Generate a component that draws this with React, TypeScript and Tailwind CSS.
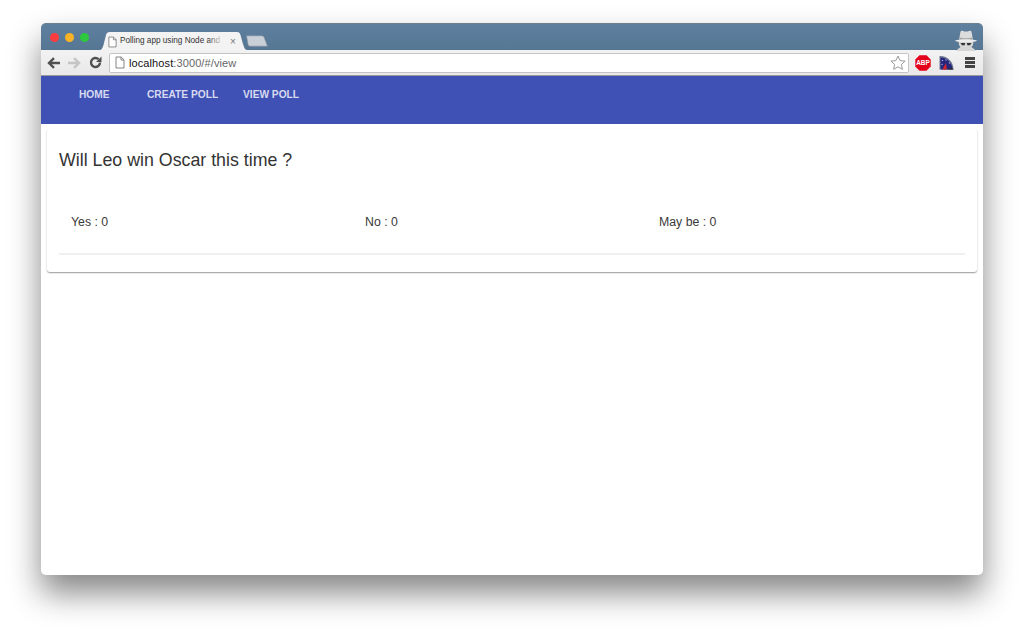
import React from 'react';

const sans = "font-['Liberation_Sans',Arial,sans-serif]";

const PageIcon = ({ className }: { className: string }) => (
  <svg className={className} viewBox="0 0 10 12" fill="#fff" stroke="#777" strokeWidth="0.9">
    <path d="M1 .5h5.200L9 3.300v8.200H1z" />
    <path d="M6 .5v3h3" fill="none" />
  </svg>
);

const Spy = () => (
  <svg width="24" height="21" viewBox="0 0 24 21" className="absolute right-[5px] top-[6px]">
    <path d="M5 10 6.400 2.200C6.700.8 7.900.4 9 1c1.900.8 4.100.8 6 0 1.100-.6 2.300-.2 2.600 1.200L19 10z" fill="#dcdcdc" />
    <path d="M5.600 7.500c4 1.100 8.800 1.100 12.800 0l.4 2.500H5.200z" fill="#a6a6a6" />
    <path d="M.8 10.800C5 8.800 19 8.800 23.200 10.800 19 12.800 5 12.800.8 10.800z" fill="#ececec" />
    <path d="M4.800 12h14.400c.4 2.300-.5 4-1.700 5l5 4H1.500l5-4C5.300 16 4.400 14.300 4.800 12z" fill="#d6d6d6" />
    <path d="M6.500 13h4.700l-.6 2.300H8zM12.800 13h4.700L16 15.300h-2.600z" fill="#333" />
  </svg>
);

const Abp = () => (
  <svg width="16" height="16" viewBox="0 0 16 16">
    <path d="M4.500.3h7l4.200 4.200v7l-4.200 4.200h-7L.3 11.500v-7z" fill="#e4001b" />
    <text x="8" y="10.400" textAnchor="middle" fontSize="6.400" fontWeight="700" fill="#fff" fontFamily="Liberation Sans, sans-serif">ABP</text>
  </svg>
);

const Gauge = () => (
  <svg width="15" height="15" viewBox="0 0 15 15">
    <path d="M.5 14.500V1C8 .5 14.500 6.500 14.500 14.500z" fill="#6f7690" />
    <path d="M1.500 14.500V2.500C8 2.500 13 7.500 13.500 14.500z" fill="#26267c" />
    <path d="M9 14.500A3 3 0 0 1 14.500 14.500z" fill="#2c2c34" />
    <path d="M3.500 14.500 7 8l.8 6.500z" fill="#d8232a" />
    <circle cx="3.500" cy="5.500" r=".7" fill="#a9b0ea" />
    <circle cx="7" cy="5" r=".7" fill="#a9b0ea" />
    <circle cx="10.500" cy="8" r=".7" fill="#a9b0ea" />
    <circle cx="3" cy="9.500" r=".7" fill="#a9b0ea" />
  </svg>
);

const Toolbar = () => (
  <div className="h-[26px] bg-gradient-to-b from-[#f2f2f2] to-[#e9e9e9] border-b border-[#9a9a9a] flex items-center pl-[6px] pr-[7px]">
    <svg width="13" height="12" viewBox="0 0 13 12" fill="none" stroke="#505050" strokeWidth="2.400">
      <path d="M13 6H3M7 1.200 2 6l5 4.800" />
    </svg>
    <svg width="13" height="12" viewBox="0 0 13 12" fill="none" stroke="#c4c4c4" strokeWidth="2.400" className="ml-[8px]">
      <path d="M0 6h10M6 1.200 11 6l-5 4.800" />
    </svg>
    <svg width="13" height="13" viewBox="0 0 13 13" fill="none" className="ml-[8px]">
      <path d="M11 6.500A4.500 4.500 0 1 1 9.600 3.200" stroke="#505050" strokeWidth="2.400" />
      <path d="M12.500.5V6H7z" fill="#505050" />
    </svg>
    <div className="ml-[7px] w-[800px] h-[20px] bg-white border border-[#c4c4c4] rounded-[2px] flex items-center pl-[5px] pr-[2px]">
      <PageIcon className="w-[10px] h-[13px]" />
      <span className={`ml-[4px] pt-[1px] text-[11px] tracking-[0.1px] text-[#111] ${sans}`}>
        localhost<span className="text-[#666]">:3000/#/view</span>
      </span>
      <svg width="16" height="15" viewBox="0 0 16 15" fill="#fff" stroke="#9a9a9a" className="ml-auto">
        <path d="m8 1 2.100 4.600 5 .5-3.700 3.300 1 4.900L8 11.800l-4.400 2.500 1-4.900L.9 6.100l5-.5z" />
      </svg>
    </div>
    <div className="ml-[6px] flex items-center">
      <Abp />
      <div className="ml-[8px]"><Gauge /></div>
      <div className="ml-[11px] w-[10px] flex flex-col gap-[1.500px]">
        <div className="h-[2.500px] bg-[#444]" />
        <div className="h-[2.500px] bg-[#444]" />
        <div className="h-[2.500px] bg-[#444]" />
      </div>
    </div>
  </div>
);

const TitleBar = () => (
  <div className="relative h-[27px] bg-gradient-to-b from-[#5f7f9f] to-[#567694] border-t border-[#6e7f8e] rounded-t-[5px] flex items-end pl-[9px]">
    <div className="self-center flex gap-[6px]">
      <div className="w-[9px] h-[9px] rounded-full bg-[#fc3d3f]" />
      <div className="w-[9px] h-[9px] rounded-full bg-[#fdb325]" />
      <div className="w-[9px] h-[9px] rounded-full bg-[#2dc83e]" />
    </div>
    <div className="relative ml-[11px] w-[147px] h-[18px] flex items-center pl-[8px] pt-[1px]">
      <svg viewBox="0 0 147 18" preserveAspectRatio="none" className="absolute inset-0 w-full h-full" fill="#f3f3f3">
        <path d="M0 18C2 18 3 15 4 11L6 3C6.500 1 7.500 0 10 0H137C139 0 140 1 140.500 3L143 12C144 15 145 18 147 18z" />
      </svg>
      <PageIcon className="relative w-[9px] h-[12px] shrink-0" />
      <span className={`relative ml-[3px] w-[104px] whitespace-nowrap text-[8.200px] text-[#333] ${sans}`}>
        Polling app using Node and
        <span className="absolute right-0 top-0 h-full w-[16px] bg-gradient-to-r from-[#f3f3f300] to-[#f3f3f3]" />
      </span>
      <span className={`relative ml-[6px] text-[10px] leading-none text-[#777] ${sans}`}>×</span>
    </div>
    <svg width="22" height="12" viewBox="0 0 22 12" className="-ml-[1px] mb-[3px]" fill="#c9cfd6" stroke="#7e8f9f" strokeWidth="0.6">
      <path d="M.5.8h15c1.500 0 2.200.7 2.700 1.700L21.500 11.200H4C3 11.200 2.400 10.500 2 9.500z" />
    </svg>
    <Spy />
  </div>
);

const NavBar = () => (
  <nav className={`h-[48px] bg-[#3f51b5] flex items-start pt-[12px] pl-[38px] text-[10.200px] leading-[13px] font-bold text-[#d7daf0] ${sans}`}>
    <a className="w-[68px]">HOME</a>
    <a className="w-[96px]">CREATE POLL</a>
    <a>VIEW POLL</a>
  </nav>
);

const Option = ({ label }: { label: string }) => (
  <div className="w-[294px] pl-[12px] text-[12.300px] leading-[15px] text-[#3a3a3a]">{label}</div>
);

const PollCard = () => (
  <div className={`mx-[6px] mt-[5px] h-[143px] bg-white rounded-[3px] shadow-[0_1px_1.500px_rgba(0,0,0,0.4)] px-[12px] ${sans}`}>
    <h2 className="pt-[21px] text-[17.800px] leading-[21px] text-[#333]">Will Leo win Oscar this time ?</h2>
    <div className="mt-[44px] flex">
      <Option label="Yes : 0" />
      <Option label="No : 0" />
      <Option label="May be : 0" />
    </div>
    <div className="mt-[23px] h-[2px] bg-[#f0f0f0]" />
  </div>
);

export default function App() {
  return (
    <div className="w-[1024px] h-[634px] overflow-hidden bg-white pt-[23px] pl-[41px]">
      <div className="w-[942px] h-[552px] bg-white rounded-[5px] shadow-[0_18px_32px_rgba(0,0,0,0.48)]">
        <TitleBar />
        <Toolbar />
        <NavBar />
        <PollCard />
      </div>
    </div>
  );
}
